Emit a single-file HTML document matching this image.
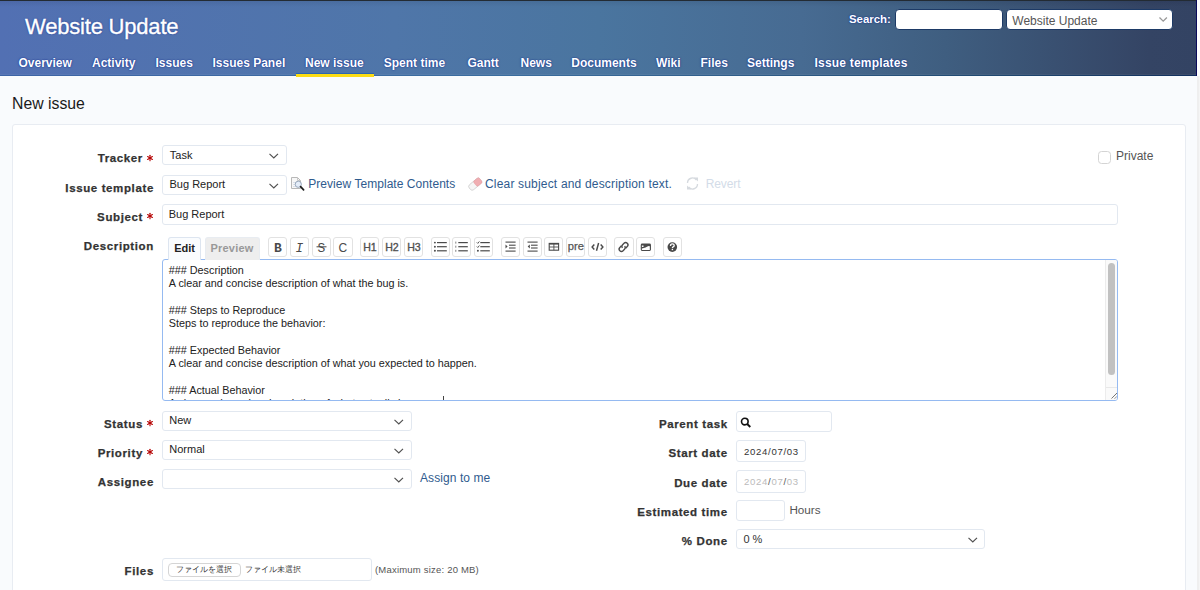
<!DOCTYPE html>
<html><head><meta charset="utf-8">
<style>
html,body{margin:0;padding:0;}
body{width:1200px;height:590px;overflow:hidden;position:relative;background:#f9fbfd;font-family:"Liberation Sans",sans-serif;}
.a{position:absolute;}
.t{position:absolute;white-space:pre;line-height:1;}
#hdr{position:absolute;left:0;top:0;width:1197px;height:76px;
 background:linear-gradient(to right,#5270b3 0%,#4f76a9 33%,#4a759f 50%,#476b92 67%,#3f5e80 79%,#344464 96%,#334363 100%);}
#hdr .top{position:absolute;left:0;top:0;width:1197px;height:1px;background:#232b33;}
#hdr .t{text-shadow:0 0 1px rgba(0,30,140,0.9),0 0 2px rgba(0,30,140,0.5);}
#hdr .bot{position:absolute;left:0;top:75px;width:1197px;height:1px;background:linear-gradient(to right,#3d64a6 0%,#3a6d9f 42%,#2d5a85 65%,#1f4870 83%,#12305e 100%);}
#hdr .rgt{position:absolute;left:1196px;top:0;width:1px;height:76px;background:#0a0a5a;}
.menu{font-size:12px;font-weight:bold;color:#fff;top:56.5px;}
.lbl{font-size:11.5px;font-weight:bold;color:#333;letter-spacing:0.62px;text-align:right;margin-right:-0.6px;margin-top:1px;-webkit-text-stroke:0.25px #333;}
.req{position:absolute;color:#b00;font-size:16px;font-weight:bold;margin-top:-1.2px;}
.ctl{position:absolute;box-sizing:border-box;border:1px solid #e2e8f0;border-radius:3px;background:#fff;}
.val{font-size:11px;color:#222;}
.lnk{font-size:12px;color:#2f5b8e;}
.btn{position:absolute;box-sizing:border-box;top:237px;width:19.2px;height:19.5px;border:1px solid #e2e2e2;border-radius:3px;background:#fff;}
.btn svg{position:absolute;left:-1px;top:-1px;}
.ta{font-size:10.8px;color:#222;line-height:13.33px;}
</style></head><body>
<div id="hdr">
 <div class="a" style="left:0;top:1px;width:1196px;height:6px;background:linear-gradient(to bottom,rgba(0,0,20,0.08),rgba(0,0,20,0));"></div><div class="top"></div><div class="a" style="left:0;top:74px;width:1196px;height:1px;background:rgba(255,255,255,0.05);"></div><div class="bot"></div><div class="rgt"></div>
 <div class="t" style="left:25px;top:16.4px;font-size:22px;color:#fff;letter-spacing:-0.2px;-webkit-text-stroke:0.4px #fff;">Website Update</div>
 <div class="t menu" style="left:18.5px;">Overview</div>
 <div class="t menu" style="left:92px;">Activity</div>
 <div class="t menu" style="left:155.5px;">Issues</div>
 <div class="t menu" style="left:212.5px;">Issues Panel</div>
 <div class="t menu" style="left:305px;">New issue</div>
 <div class="a" style="left:295.5px;top:73px;width:78.5px;height:1px;background:#2a66b0;"></div><div class="a" style="left:295.5px;top:74px;width:78.5px;height:3px;background:#fcdc14;z-index:2;"></div>
 <div class="t menu" style="left:383.75px;">Spent time</div>
 <div class="t menu" style="left:467.5px;">Gantt</div>
 <div class="t menu" style="left:520.5px;">News</div>
 <div class="t menu" style="left:571.25px;">Documents</div>
 <div class="t menu" style="left:656px;">Wiki</div>
 <div class="t menu" style="left:700.5px;">Files</div>
 <div class="t menu" style="left:747px;">Settings</div>
 <div class="t menu" style="left:814.5px;letter-spacing:0.2px;">Issue templates</div>
 <div class="t" style="left:849px;top:14px;font-size:11.4px;font-weight:bold;color:#fff;">Search:</div>
 <div class="a" style="left:895px;top:9px;width:108px;height:21px;box-sizing:border-box;background:#fff;border:1px solid #1d3a66;border-radius:4px;"></div>
 <div class="a" style="left:1006px;top:9px;width:166.5px;height:21px;box-sizing:border-box;background:#fff;border:1px solid #1d3a66;border-radius:4px;"></div>
 <div class="t" style="left:1012.3px;top:15.1px;font-size:12px;color:#555;text-shadow:none;">Website Update</div>
 <svg class="a" style="left:1158px;top:16px" width="11" height="7"><polyline points="1.5,1.5 5.2,5.2 8.9,1.5" fill="none" stroke="#999" stroke-width="1.3"/></svg>
</div>
<div class="a" style="left:1197px;top:76px;width:2px;height:514px;background:#efefef;"></div><div class="a" style="left:1199px;top:76px;width:1px;height:514px;background:#f5f5f5;"></div>
<div class="a" style="left:1197px;top:0;width:3px;height:76px;background:#fdfdfd;"></div>

<div class="t" style="left:12px;top:95.6px;font-size:15.8px;color:#1a1a1a;">New issue</div>
<div class="a" style="left:12px;top:124px;width:1174px;height:480px;box-sizing:border-box;border:1px solid #e8ecf2;border-radius:3px;background:#fff;"></div>

<!-- content goes here -->

<!-- labels -->
<div class="t lbl" style="right:1057.7px;top:152.2px;">Tracker</div><div class="a" style="left:146px;top:153.5px;width:8px;height:8px;"><svg width="8" height="8" style="position:absolute;left:0;top:0"><g stroke="#b50000" stroke-width="1.1" stroke-linecap="round"><line x1="4" y1="1.2" x2="4" y2="6.8"/><line x1="1.6" y1="2.6" x2="6.4" y2="5.4"/><line x1="1.6" y1="5.4" x2="6.4" y2="2.6"/></g></svg></div>
<div class="t lbl" style="right:1046.7px;top:181.7px;">Issue template</div>
<div class="t lbl" style="right:1057.6px;top:210.5px;">Subject</div><div class="a" style="left:146px;top:211.8px;width:8px;height:8px;"><svg width="8" height="8" style="position:absolute;left:0;top:0"><g stroke="#b50000" stroke-width="1.1" stroke-linecap="round"><line x1="4" y1="1.2" x2="4" y2="6.8"/><line x1="1.6" y1="2.6" x2="6.4" y2="5.4"/><line x1="1.6" y1="5.4" x2="6.4" y2="2.6"/></g></svg></div>
<div class="t lbl" style="right:1046.7px;top:239.8px;">Description</div>
<div class="t lbl" style="right:1057.7px;top:417.7px;">Status</div><div class="a" style="left:146px;top:419.0px;width:8px;height:8px;"><svg width="8" height="8" style="position:absolute;left:0;top:0"><g stroke="#b50000" stroke-width="1.1" stroke-linecap="round"><line x1="4" y1="1.2" x2="4" y2="6.8"/><line x1="1.6" y1="2.6" x2="6.4" y2="5.4"/><line x1="1.6" y1="5.4" x2="6.4" y2="2.6"/></g></svg></div>
<div class="t lbl" style="right:1057.7px;top:446.7px;">Priority</div><div class="a" style="left:146px;top:448.0px;width:8px;height:8px;"><svg width="8" height="8" style="position:absolute;left:0;top:0"><g stroke="#b50000" stroke-width="1.1" stroke-linecap="round"><line x1="4" y1="1.2" x2="4" y2="6.8"/><line x1="1.6" y1="2.6" x2="6.4" y2="5.4"/><line x1="1.6" y1="5.4" x2="6.4" y2="2.6"/></g></svg></div>
<div class="t lbl" style="right:1046.7px;top:475.6px;">Assignee</div>
<div class="t lbl" style="right:1046.7px;top:564.8px;">Files</div>
<div class="t lbl" style="right:472.9px;top:417.9px;">Parent task</div>
<div class="t lbl" style="right:472.9px;top:447px;">Start date</div>
<div class="t lbl" style="right:472.9px;top:477px;">Due date</div>
<div class="t lbl" style="right:472.9px;top:506px;">Estimated time</div>
<div class="t lbl" style="right:472.9px;top:535.3px;">% Done</div>

<!-- tracker -->
<div class="ctl" style="left:162px;top:145px;width:125px;height:20px;"></div>
<div class="t val" style="left:169.8px;top:149.6px;">Task</div>
<svg class="a" style="left:268px;top:152px" width="12" height="8"><polyline points="1.5,1.8 5.8,6 10,1.8" fill="none" stroke="#505050" stroke-width="1.15"/></svg>

<!-- template -->
<div class="ctl" style="left:162px;top:174.5px;width:125px;height:20px;"></div>
<div class="t val" style="left:169.5px;top:178.7px;">Bug Report</div>
<svg class="a" style="left:268px;top:181.5px" width="12" height="8"><polyline points="1.5,1.8 5.8,6 10,1.8" fill="none" stroke="#505050" stroke-width="1.15"/></svg>

<!-- preview template icon -->
<svg class="a" style="left:290px;top:176px" width="16" height="16">
 <path d="M1.5,1.5 H7.5 L10.5,4.5 V12.5 H1.5 Z" fill="#f7f7f7" stroke="#b8b8b8" stroke-width="1"/>
 <path d="M7.5,1.5 V4.5 H10.5" fill="none" stroke="#c4c4c4" stroke-width="0.9"/>
 <line x1="3" y1="6.5" x2="7" y2="6.5" stroke="#d6dde8" stroke-width="0.9"/><line x1="3" y1="8.5" x2="6" y2="8.5" stroke="#d6dde8" stroke-width="0.9"/><line x1="3" y1="10.5" x2="6" y2="10.5" stroke="#d6dde8" stroke-width="0.9"/>
 <circle cx="8.3" cy="8.3" r="3.1" fill="#e4edf9" stroke="#98a8bc" stroke-width="1"/>
 <line x1="10.6" y1="10.6" x2="13.6" y2="13.8" stroke="#1e1e1e" stroke-width="1.7" stroke-linecap="round"/>
</svg>
<div class="t lnk" style="left:308.2px;top:177.5px;letter-spacing:0.05px;">Preview Template Contents</div>
<!-- eraser -->
<svg class="a" style="left:467px;top:175.5px" width="16" height="16">
 <g transform="rotate(-40 8 8)">
 <rect x="1" y="5" width="14" height="6.5" rx="2.5" fill="#f6f6f6" stroke="#cfcfcf" stroke-width="0.8"/>
 <rect x="8" y="5" width="7" height="6.5" rx="1.5" fill="#f0aeb2" stroke="#e39a9e" stroke-width="0.5"/>
 </g>
</svg>
<div class="t lnk" style="left:485px;top:177.5px;letter-spacing:0.18px;">Clear subject and description text.</div>
<!-- revert -->
<svg class="a" style="left:685px;top:176px" width="15" height="15">
 <path d="M2.5,7 A5,5 0 0 1 11.5,4" fill="none" stroke="#d6dadf" stroke-width="1.35"/>
 <polygon points="9,1.5 13,1.5 13,5.5" fill="#d6dadf"/>
 <path d="M12.5,8 A5,5 0 0 1 3.5,11" fill="none" stroke="#d6dadf" stroke-width="1.35"/>
 <polygon points="6,13.5 2,13.5 2,9.5" fill="#d6dadf"/>
</svg>
<div class="t" style="left:705.7px;top:177.5px;font-size:12px;color:#d3dce8;letter-spacing:-0.1px;">Revert</div>

<!-- private -->
<div class="a" style="left:1097.5px;top:150.5px;width:13px;height:13px;box-sizing:border-box;border:1px solid #d4d4d4;border-radius:3.5px;background:#fff;"></div>
<div class="t" style="left:1116px;top:149.6px;font-size:12px;color:#555;">Private</div>

<!-- subject -->
<div class="ctl" style="left:162px;top:204px;width:955.5px;height:20.5px;"></div>
<div class="t val" style="left:168.7px;top:208.5px;">Bug Report</div>

<!-- textarea -->
<div class="a" style="left:162px;top:259px;width:955.5px;height:141.5px;box-sizing:border-box;border:1px solid #95baf1;border-radius:3px;background:#fff;overflow:hidden;">
 <div class="a ta" style="left:5.8px;top:4.1px;white-space:pre;">### Description
A clear and concise description of what the bug is.

### Steps to Reproduce
Steps to reproduce the behavior:

### Expected Behavior
A clear and concise description of what you expected to happen.

### Actual Behavior
A clear and concise description of what actually happens.</div>
 <div class="a" style="left:942px;top:0;width:12px;height:140px;background:#fafafa;border-left:1px solid #ececec;"></div>
 <div class="a" style="left:945px;top:2.5px;width:6.8px;height:112px;border-radius:3.5px;background:#c1c1c1;"></div>
 <div class="a" style="left:943px;top:127px;width:11px;height:1px;background:#e8e8e8;"></div><svg class="a" style="left:943px;top:128px" width="12" height="12"><line x1="5.5" y1="10.5" x2="11" y2="5" stroke="#666" stroke-width="0.9"/><line x1="8.5" y1="10.8" x2="11" y2="8.3" stroke="#888" stroke-width="0.9"/></svg>
 <div class="a" style="left:280px;top:136px;width:1px;height:4px;background:#444;"></div>
</div>

<!-- description tabs -->
<div class="a" style="left:168px;top:237px;width:32.5px;height:23px;box-sizing:border-box;border:1px solid #dde5f0;border-bottom:none;border-radius:3px 3px 0 0;background:#fafcfe;"></div>
<div class="t" style="left:174.2px;top:243.2px;font-size:11px;font-weight:bold;color:#222;">Edit</div>
<div class="a" style="left:204.5px;top:237px;width:55px;height:23px;box-sizing:border-box;border:1px solid #e8ecf1;border-bottom:none;border-radius:3px 3px 0 0;background:#eeeeee;"></div>
<div class="t" style="left:210.5px;top:243.2px;font-size:11px;font-weight:bold;color:#999;letter-spacing:0.2px;">Preview</div>

<div class="btn" style="left:268.3px;"><svg width="19" height="19" viewBox="0 0 19 19"><text x="5.9" y="14.6" font-family="Liberation Mono" font-weight="bold" font-size="13" fill="#4a4a4a">B</text></svg></div>
<div class="btn" style="left:290px;"><svg width="19" height="19" viewBox="0 0 19 19"><text x="5.6" y="14.6" font-family="Liberation Mono" font-style="italic" font-size="13" fill="#4a4a4a">I</text></svg></div>
<div class="btn" style="left:311.7px;"><svg width="19" height="19" viewBox="0 0 19 19"><text x="5.6" y="14.6" font-family="Liberation Mono" font-size="13" fill="#4a4a4a">S</text><line x1="4.5" y1="9.8" x2="14.5" y2="9.8" stroke="#4a4a4a" stroke-width="1"/></svg></div>
<div class="btn" style="left:333.4px;"><svg width="19" height="19" viewBox="0 0 19 19"><text x="5.6" y="14.5" font-family="Liberation Sans" font-size="12" fill="#4a4a4a">C</text></svg></div>
<div class="btn" style="left:360.3px;"><svg width="19" height="19" viewBox="0 0 19 19"><text x="3.2" y="14.3" font-family="Liberation Sans" font-size="10.6" fill="#505050" stroke="#505050" stroke-width="0.35">H1</text></svg></div>
<div class="btn" style="left:382px;"><svg width="19" height="19" viewBox="0 0 19 19"><text x="3.2" y="14.3" font-family="Liberation Sans" font-size="10.6" fill="#505050" stroke="#505050" stroke-width="0.35">H2</text></svg></div>
<div class="btn" style="left:403.7px;"><svg width="19" height="19" viewBox="0 0 19 19"><text x="3.2" y="14.3" font-family="Liberation Sans" font-size="10.6" fill="#505050" stroke="#505050" stroke-width="0.35">H3</text></svg></div>
<div class="btn" style="left:430.7px;"><svg width="19" height="19" viewBox="0 0 19 19"><circle cx="3.9" cy="5.6" r="0.95" fill="#4a4a4a"/><line x1="6" y1="5.6" x2="15.8" y2="5.6" stroke="#4a4a4a" stroke-width="1.2"/><circle cx="3.9" cy="9.7" r="0.95" fill="#4a4a4a"/><line x1="6" y1="9.7" x2="15.8" y2="9.7" stroke="#4a4a4a" stroke-width="1.2"/><circle cx="3.9" cy="13.8" r="0.95" fill="#4a4a4a"/><line x1="6" y1="13.8" x2="15.8" y2="13.8" stroke="#4a4a4a" stroke-width="1.2"/></svg></div>
<div class="btn" style="left:452.3px;"><svg width="19" height="19" viewBox="0 0 19 19"><line x1="6.3" y1="5.6" x2="15.8" y2="5.6" stroke="#4a4a4a" stroke-width="1.2"/><line x1="3.8" y1="4.6" x2="3.8" y2="6.6" stroke="#4a4a4a" stroke-width="0.7"/><line x1="6.3" y1="9.7" x2="15.8" y2="9.7" stroke="#4a4a4a" stroke-width="1.2"/><line x1="3.8" y1="8.7" x2="3.8" y2="10.7" stroke="#4a4a4a" stroke-width="0.7"/><line x1="6.3" y1="13.8" x2="15.8" y2="13.8" stroke="#4a4a4a" stroke-width="1.2"/><line x1="3.8" y1="12.8" x2="3.8" y2="14.8" stroke="#4a4a4a" stroke-width="0.7"/></svg></div>
<div class="btn" style="left:474px;"><svg width="19" height="19" viewBox="0 0 19 19"><path d="M2.8,5.4 L3.8,6.4 L5.4,4.4 M2.8,9.5 L3.8,10.5 L5.4,8.5" fill="none" stroke="#4a4a4a" stroke-width="0.9"/><circle cx="3.9" cy="13.8" r="0.95" fill="#4a4a4a"/><line x1="6.3" y1="5.6" x2="15.8" y2="5.6" stroke="#4a4a4a" stroke-width="1.2"/><line x1="6.3" y1="9.7" x2="15.8" y2="9.7" stroke="#4a4a4a" stroke-width="1.2"/><line x1="6.3" y1="13.8" x2="15.8" y2="13.8" stroke="#4a4a4a" stroke-width="1.2"/></svg></div>
<div class="btn" style="left:500.8px;"><svg width="19" height="19" viewBox="0 0 19 19"><line x1="4.5" y1="5.1" x2="14.6" y2="5.1" stroke="#4a4a4a" stroke-width="1.1"/><line x1="8" y1="8.2" x2="14.6" y2="8.2" stroke="#4a4a4a" stroke-width="1.1"/><line x1="8" y1="11" x2="14.6" y2="11" stroke="#4a4a4a" stroke-width="1.1"/><line x1="4.5" y1="14.1" x2="14.6" y2="14.1" stroke="#4a4a4a" stroke-width="1.1"/><polygon points="4.5,7.6 6.6,9.6 4.5,11.6" fill="#4a4a4a"/></svg></div>
<div class="btn" style="left:522.5px;"><svg width="19" height="19" viewBox="0 0 19 19"><line x1="4.5" y1="5.1" x2="14.6" y2="5.1" stroke="#4a4a4a" stroke-width="1.1"/><line x1="8" y1="8.2" x2="14.6" y2="8.2" stroke="#4a4a4a" stroke-width="1.1"/><line x1="8" y1="11" x2="14.6" y2="11" stroke="#4a4a4a" stroke-width="1.1"/><line x1="4.5" y1="14.1" x2="14.6" y2="14.1" stroke="#4a4a4a" stroke-width="1.1"/><polygon points="6.8,7.6 4.7,9.6 6.8,11.6" fill="#4a4a4a"/></svg></div>
<div class="btn" style="left:544.2px;"><svg width="19" height="19" viewBox="0 0 19 19"><rect x="5.2" y="6.4" width="9.4" height="6.8" fill="none" stroke="#4a4a4a" stroke-width="1.1"/><rect x="5.2" y="6" width="9.4" height="1.6" fill="#4a4a4a"/><line x1="5.2" y1="10" x2="14.6" y2="10" stroke="#4a4a4a" stroke-width="0.9"/><line x1="9.9" y1="7" x2="9.9" y2="13.2" stroke="#4a4a4a" stroke-width="0.9"/></svg></div>
<div class="btn" style="left:565.9px;"><svg width="19" height="19" viewBox="0 0 19 19"><text x="1.7" y="13.2" font-family="Liberation Sans" font-size="11.2" fill="#555" stroke="#555" stroke-width="0.25">pre</text></svg></div>
<div class="btn" style="left:587.6px;"><svg width="19" height="19" viewBox="0 0 19 19"><path d="M6.3,7.4 L4.1,9.9 L6.3,12.4 M12.7,7.4 L14.9,9.9 L12.7,12.4 M10.6,6 L8.5,13.8" fill="none" stroke="#4a4a4a" stroke-width="1.45"/></svg></div>
<div class="btn" style="left:614.4px;"><svg width="19" height="19" viewBox="0 0 19 19"><g transform="rotate(-45 9.55 10)" fill="none" stroke="#4a4a4a" stroke-width="1.35"><path d="M8.9,7.7 H6.6 A2.3,2.3 0 0 0 6.6,12.3 H8.6 A2.3,2.3 0 0 0 10.9,10.2"/><path d="M10.2,12.3 H12.5 A2.3,2.3 0 0 0 12.5,7.7 H10.5 A2.3,2.3 0 0 0 8.2,9.8"/></g></svg></div>
<div class="btn" style="left:636.1px;"><svg width="19" height="19" viewBox="0 0 19 19"><rect x="5.3" y="7.1" width="9.1" height="6.4" rx="0.9" fill="#4a4a4a" stroke="#4a4a4a" stroke-width="1.1"/><path d="M5.9,12.9 L5.9,11.6 L9.6,10.6 Q12.3,8.4 13.8,9.3 V12.9 Z" fill="#fff"/><rect x="5.9" y="8.5" width="1.6" height="1.5" fill="#fff"/></svg></div>
<div class="btn" style="left:663.2px;"><svg width="19" height="19" viewBox="0 0 19 19"><circle cx="9.3" cy="10.1" r="4.8" fill="#484848"/><path d="M7.5,8.9 Q7.5,6.9 9.35,6.9 Q11.2,6.9 11.2,8.5 Q11.2,9.4 10.1,9.9 Q9.4,10.2 9.4,11.1" fill="none" stroke="#fff" stroke-width="1.35"/><rect x="8.7" y="11.8" width="1.4" height="1.4" fill="#fff"/></svg></div>

<!-- status etc -->
<div class="ctl" style="left:162px;top:411px;width:249.7px;height:19.5px;"></div>
<div class="t val" style="left:169.3px;top:415px;">New</div>
<svg class="a" style="left:393px;top:417.5px" width="12" height="8"><polyline points="1.5,1.8 5.8,6 10,1.8" fill="none" stroke="#505050" stroke-width="1.15"/></svg>
<div class="ctl" style="left:162px;top:440.3px;width:249.7px;height:19.5px;"></div>
<div class="t val" style="left:169.3px;top:444.1px;">Normal</div>
<svg class="a" style="left:393px;top:446.8px" width="12" height="8"><polyline points="1.5,1.8 5.8,6 10,1.8" fill="none" stroke="#505050" stroke-width="1.15"/></svg>
<div class="ctl" style="left:162px;top:469.3px;width:249.7px;height:19.5px;"></div>
<svg class="a" style="left:393px;top:475.8px" width="12" height="8"><polyline points="1.5,1.8 5.8,6 10,1.8" fill="none" stroke="#505050" stroke-width="1.15"/></svg>
<div class="t lnk" style="left:420px;top:471.8px;letter-spacing:0.08px;">Assign to me</div>

<!-- files -->
<div class="ctl" style="left:162.3px;top:558px;width:209.5px;height:22.5px;"></div>
<div class="a" style="left:168px;top:562.5px;width:73px;height:14.5px;box-sizing:border-box;border:1px solid #d5d5d5;border-radius:4px;background:#fff;"></div>
<div class="t" style="left:175.5px;top:565.2px;font-size:8.3px;color:#333;">ファイルを選択</div>
<div class="t" style="left:244.6px;top:565.2px;font-size:8.3px;color:#333;">ファイル未選択</div>
<div class="t" style="left:375px;top:564.8px;font-size:9.5px;color:#555;letter-spacing:0.2px;">(Maximum size: 20 MB)</div>

<!-- right column -->
<div class="ctl" style="left:736.4px;top:411px;width:95.3px;height:20.8px;"></div>
<svg class="a" style="left:740px;top:416.5px" width="12" height="11"><circle cx="4.8" cy="4.6" r="3.3" fill="none" stroke="#111" stroke-width="1.6"/><line x1="7.2" y1="7" x2="10.3" y2="10" stroke="#111" stroke-width="1.9"/></svg>
<div class="ctl" style="left:736.4px;top:440.3px;width:70px;height:22.2px;"></div>
<div class="t" style="left:744px;top:447.3px;font-size:9.6px;color:#333;letter-spacing:0.68px;">2024/07/03</div>
<div class="ctl" style="left:736.4px;top:470px;width:70px;height:22.5px;"></div>
<div class="t" style="left:744px;top:477.3px;font-size:9.6px;color:#bbb;letter-spacing:0.68px;">2024<span style="color:#555">/</span>07<span style="color:#555">/</span>03</div>
<div class="ctl" style="left:736.4px;top:500.2px;width:48.4px;height:20.6px;"></div>
<div class="t" style="left:789.4px;top:504.3px;font-size:11.7px;color:#555;">Hours</div>
<div class="ctl" style="left:736.4px;top:529.2px;width:249px;height:19.5px;"></div>
<div class="t val" style="left:743.4px;top:533.6px;color:#333;">0 %</div>
<svg class="a" style="left:967px;top:535.8px" width="12" height="8"><polyline points="1.5,1.8 5.8,6 10,1.8" fill="none" stroke="#505050" stroke-width="1.15"/></svg>

</body></html>
